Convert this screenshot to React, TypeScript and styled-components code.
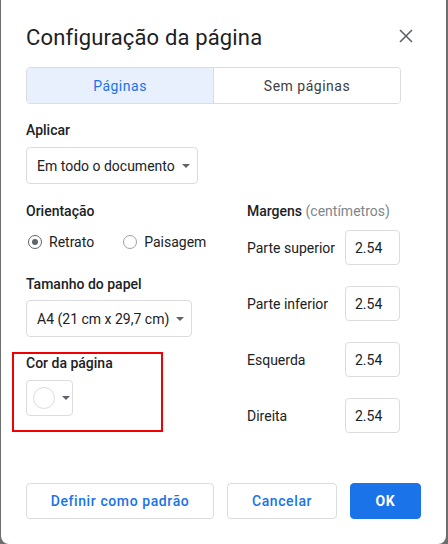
import React from 'react';
import styled, { createGlobalStyle } from 'styled-components';

const GlobalStyle = createGlobalStyle`
  html, body {
    margin: 0;
    height: 100%;
  }
  body {
    background: #6e6e6e;
    font-family: Roboto, "Liberation Sans", Arial, sans-serif;
    overflow: hidden;
  }
`;

const Dialog = styled.div`
  box-sizing: border-box;
  width: 445px;
  height: 544px;
  margin-left: 1px;
  background: #fff;
  border-radius: 0 0 8px 8px;
  padding: 24px 0 25px 25px;
  display: flex;
  flex-direction: column;
  color: #202124;
`;

const Header = styled.div`
  display: flex;
  align-items: center;
  justify-content: space-between;
  width: 392px;
  height: 28px;
`;

const Title = styled.h1`
  margin: 0;
  font-size: 22px;
  line-height: 28px;
  font-weight: 400;
  letter-spacing: 0.15px;
  color: #202124;
`;

const CloseButton = styled.button`
  border: 0;
  background: none;
  padding: 0;
  width: 24px;
  height: 24px;
  display: flex;
  align-items: center;
  justify-content: center;
  color: #5f6368;
  margin-top: -4px;
`;

const Tabs = styled.div`
  margin-top: 15px;
  width: 375px;
  height: 37px;
  display: flex;
  box-sizing: border-box;
  border: 1px solid #dadce0;
  border-radius: 4px;
  overflow: hidden;
`;

const Tab = styled.div<{ $active?: boolean }>`
  flex: 1;
  display: flex;
  align-items: center;
  justify-content: center;
  font-size: 14px;
  font-weight: 400;
  letter-spacing: 0.5px;
  color: ${(p) => (p.$active ? '#1a73e8' : '#3c4043')};
  background: ${(p) => (p.$active ? '#e8f0fe' : '#fff')};
  & + & {
    border-left: 1px solid #dadce0;
  }
`;

const Body = styled.div`
  margin-top: 16px;
  display: flex;
  flex-direction: column;
  align-items: flex-start;
`;

const Columns = styled.div`
  margin-top: 17px;
  display: grid;
  grid-template-columns: 221px 1fr;
`;

const Column = styled.div`
  display: flex;
  flex-direction: column;
  align-items: flex-start;
`;

const Label = styled.div<{ $gap?: number }>`
  margin-top: ${(p) => p.$gap ?? 0}px;
  font-size: 14px;
  line-height: 20px;
  font-weight: 500;
  color: #202124;
`;

const Hint = styled.span`
  font-weight: 400;
  color: #80868b;
`;

const Select = styled.div<{ $gap?: number }>`
  margin-top: ${(p) => p.$gap ?? 7}px;
  box-sizing: border-box;
  height: 37px;
  display: inline-flex;
  align-items: center;
  gap: 7px;
  padding: 0 7px 0 10px;
  border: 1px solid #dadce0;
  border-radius: 4px;
  font-size: 14px;
  color: #202124;
`;

const Caret = styled.span`
  width: 0;
  height: 0;
  border-left: 4px solid transparent;
  border-right: 4px solid transparent;
  border-top: 4px solid #5f6368;
`;

const RadioRow = styled.div`
  margin-top: 11px;
  height: 20px;
  display: flex;
  align-items: center;
  font-size: 14px;
  color: #202124;
`;

const RadioOption = styled.label`
  display: flex;
  align-items: center;
  gap: 7px;
  margin-left: 2px;
  & + & {
    margin-left: 29px;
  }
`;

const RadioDot = styled.span<{ $checked?: boolean }>`
  box-sizing: border-box;
  width: 14px;
  height: 14px;
  border-radius: 50%;
  border: 1px solid ${(p) => (p.$checked ? '#5f6368' : '#9aa0a6')};
  display: flex;
  align-items: center;
  justify-content: center;
  &::after {
    content: '';
    display: ${(p) => (p.$checked ? 'block' : 'none')};
    width: 6px;
    height: 6px;
    border-radius: 50%;
    background: #5f6368;
  }
`;

const ColorSection = styled.div`
  position: relative;
  margin-top: 16px;
  display: flex;
  flex-direction: column;
  align-items: flex-start;
`;

const Highlight = styled.div`
  position: absolute;
  left: -14px;
  top: -1px;
  width: 151px;
  height: 80px;
  box-sizing: border-box;
  border: 2px solid #f00000;
  pointer-events: none;
`;

const ColorButton = styled.div`
  margin-top: 7px;
  box-sizing: border-box;
  width: 47px;
  height: 36px;
  border: 1px solid #dadce0;
  border-radius: 4px;
  display: flex;
  align-items: center;
  gap: 7px;
  padding-left: 6px;
`;

const Swatch = styled.span`
  box-sizing: border-box;
  width: 22px;
  height: 22px;
  border-radius: 50%;
  border: 1px solid #dadce0;
  background: #fff;
`;

const MarginRow = styled.div<{ $first?: boolean }>`
  margin-top: ${(p) => (p.$first ? 9 : 21)}px;
  display: grid;
  grid-template-columns: 98px 55px;
  align-items: center;
  font-size: 14px;
  color: #202124;
`;

const MarginInput = styled.div`
  box-sizing: border-box;
  height: 35px;
  border: 1px solid #dadce0;
  border-radius: 4px;
  display: flex;
  align-items: center;
  padding-left: 9px;
  font-size: 14px;
`;

const Footer = styled.div`
  margin-top: auto;
  display: flex;
  gap: 13px;
`;

const Button = styled.button<{ $primary?: boolean; $w: number }>`
  box-sizing: border-box;
  width: ${(p) => p.$w}px;
  height: 36px;
  border-radius: 4px;
  border: 1px solid ${(p) => (p.$primary ? '#1a73e8' : '#dadce0')};
  background: ${(p) => (p.$primary ? '#1a73e8' : '#fff')};
  color: ${(p) => (p.$primary ? '#fff' : '#1a73e8')};
  font-family: Roboto, "Liberation Sans", Arial, sans-serif;
  font-size: 14px;
  font-weight: ${(p) => (p.$primary ? 700 : 500)};
  letter-spacing: 0.6px;
  padding: 0;
`;

const margins = ['Parte superior', 'Parte inferior', 'Esquerda', 'Direita'];

export default function App() {
  return (
    <>
      <GlobalStyle />
      <Dialog>
        <Header>
          <Title>Configuração da página</Title>
          <CloseButton aria-label="Fechar">
            <svg width="14" height="14" viewBox="0 0 14 14">
              <path d="M1 1L13 13M13 1L1 13" stroke="currentColor" strokeWidth="1.6" />
            </svg>
          </CloseButton>
        </Header>

        <Tabs>
          <Tab $active>Páginas</Tab>
          <Tab>Sem páginas</Tab>
        </Tabs>

        <Body>
          <Label>Aplicar</Label>
          <Select>
            Em todo o documento
            <Caret />
          </Select>

          <Columns>
            <Column>
              <Label>Orientação</Label>
              <RadioRow>
                <RadioOption>
                  <RadioDot $checked />
                  Retrato
                </RadioOption>
                <RadioOption>
                  <RadioDot />
                  Paisagem
                </RadioOption>
              </RadioRow>

              <Label $gap={22}>Tamanho do papel</Label>
              <Select $gap={6}>
                A4 (21 cm x 29,7 cm)
                <Caret />
              </Select>

              <ColorSection>
                <Highlight />
                <Label>Cor da página</Label>
                <ColorButton>
                  <Swatch />
                  <Caret />
                </ColorButton>
              </ColorSection>
            </Column>

            <Column>
              <Label>
                Margens <Hint>(centímetros)</Hint>
              </Label>
              {margins.map((m, i) => (
                <MarginRow key={m} $first={i === 0}>
                  <span>{m}</span>
                  <MarginInput>2.54</MarginInput>
                </MarginRow>
              ))}
            </Column>
          </Columns>
        </Body>

        <Footer>
          <Button $w={188}>Definir como padrão</Button>
          <Button $w={110}>Cancelar</Button>
          <Button $w={71} $primary>
            OK
          </Button>
        </Footer>
      </Dialog>
    </>
  );
}
